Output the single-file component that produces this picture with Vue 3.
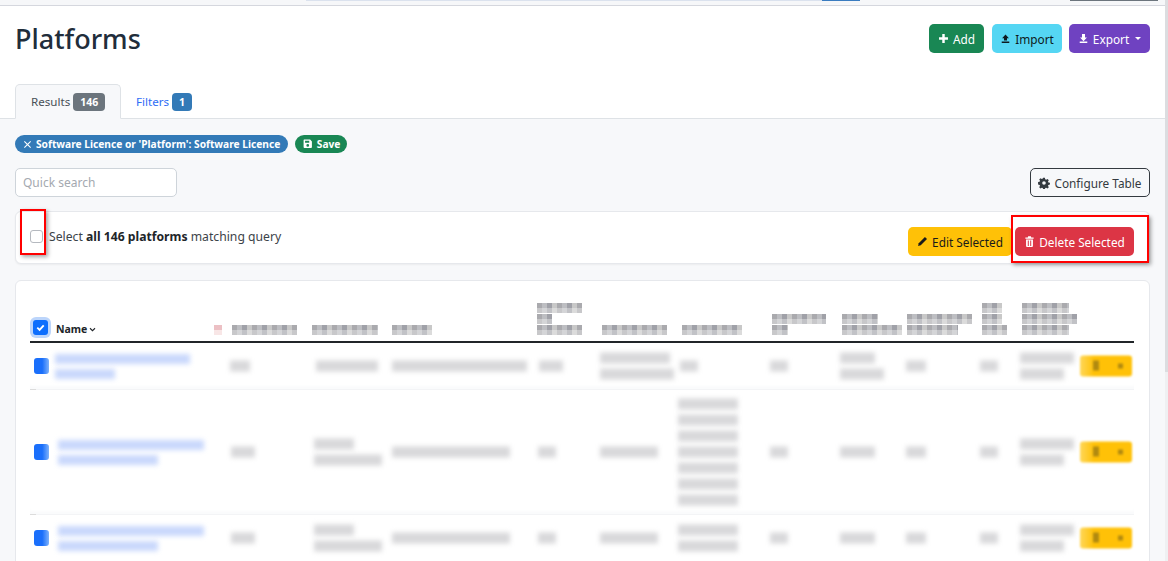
<script setup>
const headerCells = [
  { left: 214, width: 8, lines: [1], pink: true },
  { left: 232, width: 65, lines: [1] },
  { left: 312, width: 66, lines: [1] },
  { left: 392, width: 40, lines: [1] },
  { left: 537, width: 45, lines: [1, 0.34, 1] },
  { left: 602, width: 65, lines: [1] },
  { left: 682, width: 60, lines: [1] },
  { left: 772, width: 54, lines: [1, 0.3] },
  { left: 842, width: 60, lines: [0.6, 1] },
  { left: 907, width: 65, lines: [1, 0.78] },
  { left: 982, width: 25, lines: [0.8, 0.8, 1] },
  { left: 1022, width: 55, lines: [0.85, 1, 0.85] },
]
const tail = [
  { left: 770, lines: [18] },
]
const rows = [
  {
    linkLines: [135, 60],
    cells: [
      { left: 230, lines: [20] }, { left: 316, lines: [62] }, { left: 392, lines: [135] },
      { left: 539, lines: [24] }, { left: 600, lines: [70, 74] }, { left: 680, lines: [18] },
      ...tail, { left: 840, lines: [35, 44] }, { left: 906, lines: [20] },
      { left: 980, lines: [18] }, { left: 1020, lines: [54, 44] }
    ]
  },
  {
    linkLines: [146, 100],
    cells: [
      { left: 231, lines: [24] }, { left: 314, lines: [40, 68] }, { left: 392, lines: [118] },
      { left: 538, lines: [18] }, { left: 600, lines: [58] },
      { left: 678, lines: [60, 60, 60, 60, 60, 60, 60] },
      ...tail, { left: 840, lines: [35] }, { left: 906, lines: [20] },
      { left: 980, lines: [18] }, { left: 1020, lines: [54, 44] }
    ]
  },
  {
    linkLines: [146, 100],
    cells: [
      { left: 231, lines: [24] }, { left: 314, lines: [40, 68] }, { left: 392, lines: [118] },
      { left: 538, lines: [18] }, { left: 600, lines: [58] },
      { left: 678, lines: [60, 60] },
      ...tail, { left: 840, lines: [35] }, { left: 906, lines: [20] },
      { left: 980, lines: [18] }, { left: 1020, lines: [54, 44] }
    ]
  }
]
</script>

<template>
  <div class="page">
    <div class="topstrip"><i class="t1"></i><i class="t2"></i><i class="t3"></i></div>

    <header class="head">
      <div class="titlerow">
        <h1>Platforms</h1>
        <div class="actions">
          <button class="btn green w-add">
            <svg viewBox="0 0 16 16" class="ic"><path d="M6.200 1.500h3.600v4.700h4.700v3.600H9.800v4.700H6.200V9.800H1.500V6.200h4.700z" fill="currentColor"/></svg>Add
          </button>
          <button class="btn cyan w-import">
            <svg viewBox="0 0 16 16" class="ic"><path d="M8 2 13 7.500H10.200V11H5.800V7.500H3zM2.500 12.500h11V14.500h-11z" fill="currentColor"/></svg>Import
          </button>
          <button class="btn purple w-export">
            <svg viewBox="0 0 16 16" class="ic"><path d="M5.800 1.500h4.400V6.500H13L8 12 3 6.500h2.800zM2.500 12.500h11V14.500h-11z" fill="currentColor"/></svg>Export<span class="caret"></span>
          </button>
        </div>
      </div>
      <div class="tabs">
        <div class="tab active">Results <span class="badge grey">146</span></div>
        <div class="tab link">Filters <span class="badge blue">1</span></div>
      </div>
    </header>

    <main class="content">
      <div class="chips">
        <span class="chip blue">
          <svg viewBox="0 0 10 10" class="x"><path d="M1.500 1.500l7 7M8.500 1.500l-7 7" stroke="currentColor" stroke-width="1.200"/></svg>
          Software Licence or 'Platform': Software Licence
        </span>
        <span class="chip green">
          <svg viewBox="0 0 16 16" class="save"><path fill-rule="evenodd" d="M2 1h10l3 3v9.500A1.500 1.500 0 0 1 13.500 15h-11A1.500 1.500 0 0 1 1 13.500v-11A1.500 1.500 0 0 1 2 1zm1.500 2v3.500h7V3zM8 8.500a2.300 2.300 0 1 0 0 4.600 2.300 2.300 0 0 0 0-4.600z" fill="currentColor"/></svg>
          Save
        </span>
      </div>

      <div class="searchrow">
        <input class="search" placeholder="Quick search" />
        <button class="btn outline">
          <svg viewBox="0 0 16 16" class="ic gear"><path fill-rule="evenodd" d="M6.800 1h2.400l.4 2 1.300.6 1.800-1.100 1.700 1.700-1.100 1.800.6 1.300 2 .4v2.400l-2 .4-.6 1.300 1.100 1.800-1.700 1.700-1.800-1.100-1.300.6-.4 2H6.800l-.4-2-1.300-.6-1.800 1.100-1.700-1.700 1.100-1.800-.6-1.300-2-.4V6.700l2-.4.6-1.300-1.100-1.800 1.700-1.700 1.800 1.100 1.300-.6zM8 5.600a2.400 2.400 0 1 0 0 4.800 2.400 2.400 0 0 0 0-4.800z" fill="currentColor"/></svg>
          Configure Table
        </button>
      </div>

      <section class="selectcard">
        <label class="selectall">
          <span class="check"></span>
          <span>Select <b>all 146 platforms</b> matching query</span>
        </label>
        <div class="bulk">
          <button class="btn yellow w-edit">
            <svg viewBox="0 0 16 16" class="ic"><path d="M11.500 1.500 14.500 4.500 5.500 13.500 1.500 14.500 2.500 10.500z" fill="currentColor"/></svg>Edit Selected
          </button>
          <button class="btn red w-delete">
            <svg viewBox="0 0 16 16" class="ic"><path fill-rule="evenodd" d="M6 .5h4l.5 1.500H14v2H2V2h3.500zM3 5h10v9.500A1.500 1.500 0 0 1 11.500 16h-7A1.500 1.500 0 0 1 3 14.500zm2.500 1.500v8h1.500v-8zm3.500 0v8h1.500v-8z" fill="currentColor"/></svg>Delete Selected
          </button>
        </div>
        <i class="mark mark-check"></i>
        <i class="mark mark-delete"></i>
      </section>

      <section class="tablecard">
        <div class="thead">
          <span class="check on">
            <svg viewBox="0 0 12 12"><path d="M2.500 6.200 5 8.600 9.500 3.600" stroke="#fff" stroke-width="2" fill="none"/></svg>
          </span>
          <span class="namehead">Name <svg viewBox="0 0 8 6"><path d="M1 1.500 4 4.500 7 1.500" fill="none" stroke="currentColor" stroke-width="1.300"/></svg></span>
          <div v-for="(h, i) in headerCells" :key="i" class="hcell" :class="{ pink: h.pink }" :style="{ left: (h.left - 30) + 'px', width: h.width + 'px' }">
            <i v-for="(l, j) in h.lines" :key="j" :style="{ width: l * 100 + '%' }"></i>
          </div>
        </div>
        <div v-for="(r, i) in rows" :key="i" class="row" :class="'row' + i">
          <span class="rowcheck"></span>
          <div class="linkcell">
            <i v-for="(w, j) in r.linkLines" :key="j" :style="{ width: w + 'px' }"></i>
          </div>
          <div v-for="(c, j) in r.cells" :key="j" class="cell" :style="{ left: (c.left - 30) + 'px' }">
            <i v-for="(w, k) in c.lines" :key="k" :style="{ width: w + 'px' }"></i>
          </div>
          <div class="rowbtns"><i></i><i></i></div>
        </div>
      </section>
    </main>
    <div class="scrollbar"><i></i></div>
  </div>
</template>

<style>
html, body { margin: 0; height: 100%; overflow: hidden; }
</style>

<style scoped>
.page {
  position: relative;
  width: 1168px;
  height: 561px;
  overflow: hidden;
  background: #fff;
  font-family: "Noto Sans", sans-serif;
  font-size: 12px;
  color: #212529;
}
.topstrip {
  position: relative;
  height: 5px;
  background: #f6f7f9;
  border-bottom: 1px solid #d5d7de;
}
.topstrip i { position: absolute; top: 0; height: 1px; }
.t1 { left: 306px; width: 516px; background: #dbe2ee; }
.t2 { left: 822px; width: 38px; background: #3a7cc0; }
.t3 { left: 1070px; width: 88px; background: #6c757d; }
.head { height: 112px; display: flex; flex-direction: column; justify-content: space-between; border-bottom: 1px solid #dee2e6; }
.titlerow { display: flex; justify-content: space-between; align-items: flex-start; padding: 18px 18px 0 15px; }
h1 { margin: 0; font-size: 27px; font-weight: 500; line-height: 30px; color: #212d3b; }
.actions { display: flex; gap: 7px; }
.btn {
  display: inline-flex; align-items: center; justify-content: center;
  height: 29px; box-sizing: border-box; padding: 0;
  border: 1px solid transparent; border-radius: 5px;
  font: inherit; font-size: 11.800px; cursor: pointer;
}
.ic { width: 11px; height: 11px; margin-right: 4px; flex: none; }
.w-add { width: 55px; margin-right: 1px; }
.w-import { width: 70px; }
.w-export { width: 81px; }
.w-edit { width: 104px; }
.w-delete { width: 119px; }
.green { background: #198754; color: #fff; }
.cyan { background: #55d6f3; color: #0e1a20; }
.purple { background: #6f42c1; color: #fff; }
.yellow { background: #ffc107; color: #1a1a1a; }
.red { background: #dc3545; color: #fff; }
.outline { border-color: #343a40; color: #343a40; width: 120px; background: transparent; }
.caret { display: inline-block; margin-left: 6px; border-top: 3.500px solid #fff; border-left: 3.500px solid transparent; border-right: 3.500px solid transparent; }
.tabs { display: flex; padding-left: 15px; margin-bottom: -1px; height: 35px; }
.tab { display: flex; align-items: center; gap: 3px; box-sizing: border-box; height: 35px; padding: 0 15px; font-size: 11.600px; }
.tab.active { width: 106px; background: #f7f8fa; border: 1px solid #dee2e6; border-bottom-color: #f7f8fa; border-radius: 5px 5px 0 0; color: #495057; }
.tab.link { color: #2f6df6; }
.badge { display: inline-block; padding: 0 7px; border-radius: 4px; height: 18px; line-height: 18px; color: #fff; font-weight: 700; font-size: 10.500px; }
.badge.grey { background: #6c757d; }
.badge.blue { background: #337ab7; }
.content { background: #f7f8fa; height: 443px; padding: 16px 18px 0 15px; box-sizing: border-box; }
.chips { display: flex; gap: 7px; height: 18px; }
.chip { display: inline-flex; align-items: center; gap: 4px; padding: 0 7px 0 8px; border-radius: 9px; color: #fff; font-size: 10.200px; font-weight: 700; }
.chip.blue { background: #337ab7; padding-right: 8px; }
.chip.green { background: #198754; }
.x { width: 9px; height: 9px; }
.save { width: 9.500px; height: 9.500px; }
.searchrow { display: flex; justify-content: space-between; margin-top: 15px; }
.search { width: 162px; height: 29px; box-sizing: border-box; padding: 0 7px; border: 1px solid #ced4da; border-radius: 5px; font: inherit; font-size: 12px; outline: none; background: #fff; }
.search::placeholder { color: #a4a9b0; }
.gear { width: 12px; height: 12px; }
.selectcard {
  position: relative; display: flex; justify-content: space-between; align-items: flex-start;
  height: 53px; box-sizing: border-box; margin-top: 14px; padding: 0 15px 0 14px;
  background: #fff; border: 1px solid #e6e8ec; border-radius: 6px;
  box-shadow: 0 1px 2px rgba(0,0,0,.05);
}
.selectall { display: flex; align-items: center; gap: 6px; padding-top: 16px; font-size: 12.200px; color: #3c4349; }
.selectall b { font-weight: 700; color: #212529; }
.check { width: 13px; height: 13px; border: 1px solid #b5b9bf; border-radius: 3px; background: #fff; display: inline-block; box-sizing: border-box; }
.bulk { display: flex; gap: 3px; margin-top: 15px; }
.mark { position: absolute; border: 2px solid #f00; box-shadow: 2px 2px 4px rgba(0,0,0,.35); box-sizing: border-box; }
.mark-check { left: 4px; top: -3px; width: 26px; height: 46px; }
.mark-delete { left: 995px; top: 3px; width: 138px; height: 48px; }
.tablecard {
  position: relative; margin-top: 16px; height: 320px; box-sizing: border-box;
  background: #fff; border: 1px solid #e6e8ec; border-radius: 6px;
}
.thead { position: relative; height: 60px; margin: 0 15px 0 14px; border-bottom: 2px solid #212529; }
.check.on { position: absolute; left: 3px; top: 39px; width: 15px; height: 15px; background: #0d6efd; border: 0; border-radius: 3px; box-shadow: 0 0 0 3px #bcd5fb; display: flex; align-items: center; justify-content: center; }
.check.on svg { width: 11px; height: 11px; }
.namehead { position: absolute; left: 26px; top: 41px; font-weight: 700; font-size: 10.500px; display: flex; align-items: center; gap: 2px; color: #212529; }
.namehead svg { width: 7px; height: 5px; }
.hcell { position: absolute; bottom: 6px; display: flex; flex-direction: column; gap: 1px; }
.hcell i {
  display: block; height: 10px;
  background:
    linear-gradient(180deg, rgba(255,255,255,0) 50%, rgba(255,255,255,.35) 50%),
    repeating-linear-gradient(90deg, #aaaaae 0 5px, #bdbec2 5px 10px, #a0a1a8 10px 15px, #c8c8c8 15px 20px);
}
.hcell.pink i { background: linear-gradient(180deg, #ecc0c4 50%, #f8e6e6 50%); }
.row { position: relative; margin: 0 15px 0 14px; border-bottom: 1px solid #f3f4f6; box-shadow: inset 0 -4px 3px -1px #fafbfc; display: flex; align-items: center; }
.row::after { content: ""; position: absolute; left: 0; bottom: -1px; width: 6px; height: 1px; background: #dcdcdc; }
.row0 { height: 46px; }
.row1 { height: 124px; }
.row2 { height: 46px; border-bottom: 0; box-shadow: none; }
.row2::after { display: none; }
.rowcheck { width: 15px; height: 16px; margin: 0 6px 0 4px; background: linear-gradient(90deg, #1a6ffb 55%, #7eb2fb); border-radius: 3px; filter: blur(.5px); flex: none; }
.linkcell { display: flex; flex-direction: column; gap: 5px; }
.row1 .linkcell, .row2 .linkcell { margin-left: 3px; }
.linkcell i { display: block; height: 10px; background: #c9d8fc; filter: blur(2.500px); }
.cell { position: absolute; top: 50%; transform: translateY(-50%); display: flex; flex-direction: column; gap: 5px; }
.cell i { display: block; height: 11px; background: #d8d8da; filter: blur(2.500px); }
.rowbtns { position: absolute; left: 1050px; top: 50%; transform: translateY(-50%); width: 52px; height: 21px; background: linear-gradient(90deg, #ffd75a 0, #ffc107 14px); border-radius: 3px; filter: blur(1px); }
.rowbtns i { position: absolute; background: #b18a10; }
.rowbtns i:first-child { left: 13px; top: 5px; width: 6px; height: 10px; }
.rowbtns i:last-child { left: 38px; top: 8px; width: 5px; height: 5px; }
.scrollbar { position: absolute; top: 0; bottom: 0; right: 0; width: 3px; background: #eff0f2; }
.scrollbar i { display: block; height: 372px; background: #dcdde0; }
</style>
